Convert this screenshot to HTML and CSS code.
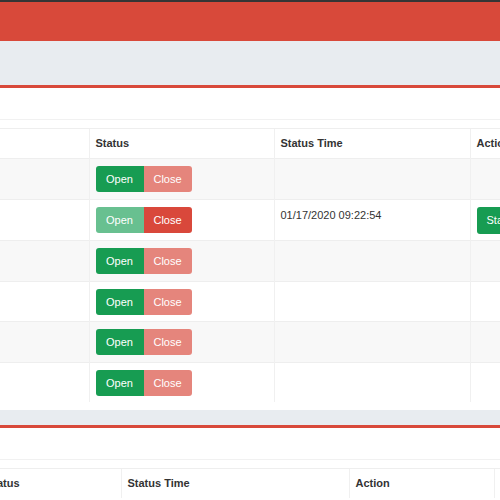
FILE: index.html
```html
<!DOCTYPE html>
<html lang="en">
<head>
    <meta charset="UTF-8">
    <meta name="viewport" content="width=device-width, initial-scale=1.0">
    <title>Doors</title>
    <link rel="stylesheet" href="styles.css">
</head>
<body>
    <div class="navbar"></div>

    <div class="panel">
        <div class="panel-heading tall"></div>
        <div class="panel-body">
            <div class="toolbar"></div>
            <table class="grid grid-one">
                <colgroup>
                    <col style="width: 89px">
                    <col style="width: 185px">
                    <col style="width: 196px">
                    <col style="width: 160px">
                </colgroup>
                <thead>
                    <tr>
                        <th></th>
                        <th>Status</th>
                        <th>Status Time</th>
                        <th>Action</th>
                    </tr>
                </thead>
                <tbody>
                    <tr>
                        <td></td>
                        <td><div class="btn-group"><span class="btn open">Open</span><span class="btn close faded">Close</span></div></td>
                        <td></td>
                        <td></td>
                    </tr>
                    <tr>
                        <td></td>
                        <td><div class="btn-group"><span class="btn open faded">Open</span><span class="btn close">Close</span></div></td>
                        <td>01/17/2020 09:22:54</td>
                        <td><span class="btn start">Start</span></td>
                    </tr>
                    <tr>
                        <td></td>
                        <td><div class="btn-group"><span class="btn open">Open</span><span class="btn close faded">Close</span></div></td>
                        <td></td>
                        <td></td>
                    </tr>
                    <tr>
                        <td></td>
                        <td><div class="btn-group"><span class="btn open">Open</span><span class="btn close faded">Close</span></div></td>
                        <td></td>
                        <td></td>
                    </tr>
                    <tr>
                        <td></td>
                        <td><div class="btn-group"><span class="btn open">Open</span><span class="btn close faded">Close</span></div></td>
                        <td></td>
                        <td></td>
                    </tr>
                    <tr>
                        <td></td>
                        <td><div class="btn-group"><span class="btn open">Open</span><span class="btn close faded">Close</span></div></td>
                        <td></td>
                        <td></td>
                    </tr>
                </tbody>
            </table>
        </div>
    </div>

    <div class="panel">
        <div class="panel-heading short"></div>
        <div class="panel-body">
            <div class="toolbar"></div>
            <table class="grid grid-two">
                <colgroup>
                    <col style="width: 141px">
                    <col style="width: 228px">
                    <col style="width: 145px">
                    <col style="width: 120px">
                </colgroup>
                <thead>
                    <tr>
                        <th>Status</th>
                        <th>Status Time</th>
                        <th>Action</th>
                        <th></th>
                    </tr>
                </thead>
            </table>
        </div>
    </div>
</body>
</html>
```

FILE: styles.css
```css
body {
    margin: 0;
    overflow: hidden;
    background-color: #fff;
    font-family: "Liberation Sans", Arial, sans-serif;
    font-size: 11px;
    color: #333;
}

.navbar {
    height: 39px;
    background-color: #d8493a;
    border-top: 2px solid #353535;
}

.panel {
    margin-bottom: 8px;
}

.panel-heading {
    background-color: #e8ecf0;
    border-bottom: 3px solid #d8493a;
}

.panel-heading.tall {
    height: 44px;
}

.panel-heading.short {
    height: 15px;
}

.toolbar {
    height: 31px;
    border-bottom: 1px solid #f1f1f1;
    margin-bottom: 8px;
}

.grid {
    border-collapse: collapse;
    table-layout: fixed;
}

.grid-one {
    width: 630px;
}

.grid-two {
    width: 634px;
    margin-left: -20px;
}

.grid th,
.grid td {
    text-align: left;
    vertical-align: top;
    border-top: 1px solid #eeeeee;
    border-left: 1px solid #f0f0f0;
    line-height: 16px;
    white-space: nowrap;
    overflow: hidden;
}

.grid th:first-child,
.grid td:first-child {
    border-left: none;
}

.grid th {
    font-weight: bold;
    padding: 6px 6px 7px;
}

.grid td {
    padding: 7px 6px 6.5px;
}

.grid tbody tr:nth-child(odd) td {
    background-color: #f8f8f8;
}

.grid td:nth-child(3) {
    padding-top: 7px;
}

.btn-group {
    display: flex;
}

.btn {
    display: inline-block;
    height: 26px;
    line-height: 26px;
    text-align: center;
    color: #fff;
}

.btn-group .btn {
    width: 48px;
}

.open {
    background-color: #179c52;
    border-radius: 3px 0 0 3px;
}

.open.faded {
    background-color: #68c090;
}

.close {
    background-color: #d9483b;
    border-radius: 0 3px 3px 0;
}

.close.faded {
    background-color: #e5857c;
}

.start {
    padding: 0 10px;
    height: 27px;
    line-height: 27px;
    background-color: #179c52;
    border-radius: 3px;
}
```
